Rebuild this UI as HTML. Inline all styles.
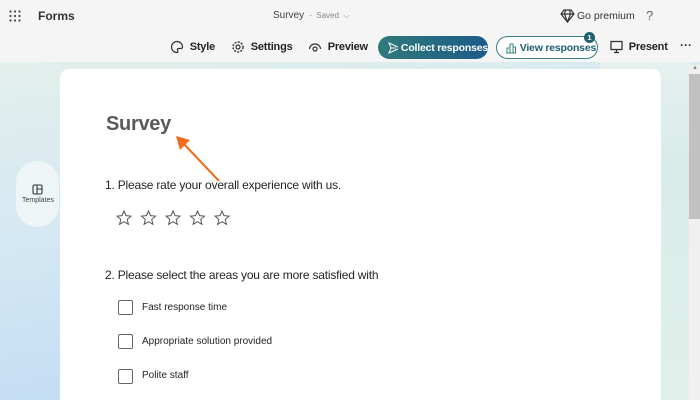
<!DOCTYPE html>
<html><head><meta charset="utf-8"><style>
*{margin:0;padding:0;box-sizing:border-box}
html,body{width:700px;height:400px;overflow:hidden}
body{position:relative;font-family:"Liberation Sans",sans-serif;color:#242424;background:#f5f5f5}
.bg{position:absolute;left:0;top:62px;width:700px;height:338px;background:linear-gradient(170deg,#e3efeb 0%,#d4e8f3 40%,#b9d6f5 100%);z-index:0}
.bg2{position:absolute;left:600px;top:62px;width:90px;height:338px;background:linear-gradient(180deg,#e6f0ef,#d8ecea 30%,#e0f0ea 100%)}
.t{position:absolute;white-space:nowrap;z-index:2}
.card{position:absolute;left:60px;top:69px;width:601px;height:340px;background:#fff;border-radius:9px;z-index:1}
.cb{position:absolute;left:118px;width:15px;height:15px;border:1.3px solid #666;border-radius:2px;z-index:2}
.btn{position:absolute;z-index:2;font-size:11px;font-weight:bold;display:flex;align-items:center;white-space:nowrap;letter-spacing:-0.2px}
</style></head><body>
<div class="bg"></div><div class="bg2"></div>
<svg class="t" style="left:9px;top:10px" width="12" height="12"><g fill="#444"><circle cx="1.5" cy="1.5" r="1.1"/><circle cx="6" cy="1.5" r="1.1"/><circle cx="10.5" cy="1.5" r="1.1"/><circle cx="1.5" cy="6" r="1.1"/><circle cx="6" cy="6" r="1.1"/><circle cx="10.5" cy="6" r="1.1"/><circle cx="1.5" cy="10.5" r="1.1"/><circle cx="6" cy="10.5" r="1.1"/><circle cx="10.5" cy="10.5" r="1.1"/></g></svg>
<div class="t" style="left:38px;top:9px;font-size:12px;font-weight:bold;color:#333">Forms</div>
<div class="t" style="left:273px;top:10px;font-size:10px;color:#444">Survey <span style="font-size:8px;color:#888">&nbsp;-&nbsp; Saved &nbsp;⌵</span></div>
<svg class="t" style="left:560px;top:9px" width="15" height="14"><path d="M4 1h7l3 4-6.5 8L1 5z M1 5h13 M5.5 1 4.5 5 7.5 13 10.5 5 9.5 1" fill="none" stroke="#333" stroke-width="1.2"/></svg>
<div class="t" style="left:577px;top:10px;font-size:10.5px;color:#333">Go premium</div>
<div class="t" style="left:646px;top:8px;font-size:13px;color:#666">?</div>

<div class="btn" style="left:170px;top:40px"><svg width="14" height="14"><path d="M7 1.5a5.5 5.5 0 1 0 0 11c1.2 0 1-1.5.5-2.2-.6-1 .2-1.8 1.3-1.8h2.2c1 0 1.5-.8 1.5-1.7A5.5 5.5 0 0 0 7 1.5z" fill="none" stroke="#333" stroke-width="1.2"/></svg>&nbsp; Style</div>
<div class="btn" style="left:231px;top:40px"><svg width="14" height="14"><circle cx="7" cy="7" r="2" fill="none" stroke="#333" stroke-width="1.2"/><circle cx="7" cy="7" r="5" fill="none" stroke="#333" stroke-width="1.4" stroke-dasharray="2 1.3"/></svg>&nbsp; Settings</div>
<div class="btn" style="left:308px;top:40px"><svg width="14" height="14"><path d="M1.5 9a5.5 5 0 0 1 11 0" fill="none" stroke="#333" stroke-width="1.2"/><circle cx="7" cy="9" r="2" fill="none" stroke="#333" stroke-width="1.2"/></svg>&nbsp; Preview</div>
<div class="btn" style="left:378px;top:36px;width:110px;height:23px;border-radius:12px;background:linear-gradient(90deg,#2f7b7b,#1c5a88);color:#fff;padding-left:10px;font-size:10.5px"><svg width="13" height="12"><path d="M1 1l11 5-11 5 2-5z M3 6h5" fill="none" stroke="#fff" stroke-width="1"/></svg>&nbsp;Collect responses</div>
<div class="btn" style="left:496px;top:36px;width:102px;height:23px;border-radius:12px;border:1.3px solid #3a7f80;background:#fff;color:#1f5f70;padding-left:8px;font-size:10.5px"><svg width="12" height="12"><path d="M1 11h10 M2 11V6h3v5 M5 11V2h3v9 M8 11V5h2.5v6" fill="none" stroke="#3a7f80" stroke-width="1"/></svg>&nbsp;View responses</div>
<div class="t" style="left:584px;top:32px;width:11px;height:11px;border-radius:50%;background:#1f5f70;color:#fff;font-size:7.5px;font-weight:bold;text-align:center;line-height:11px">1</div>
<div class="btn" style="left:610px;top:40px"><svg width="13" height="14"><rect x="1" y="1.5" width="11" height="8" fill="none" stroke="#333" stroke-width="1.3"/><path d="M6.5 9.5v3 M4 12.5h5" stroke="#333" stroke-width="1.3"/></svg>&nbsp; Present</div>
<div class="t" style="left:680px;top:38px;font-size:12px;font-weight:bold;color:#333">···</div>

<div class="t" style="left:689px;top:65px;width:11px;height:335px;background:#f0f0f0"></div>
<div class="t" style="left:689px;top:74px;width:11px;height:145px;background:#c1c1c1"></div>
<div class="t" style="left:692px;top:65px;font-size:6px;color:#888">▲</div>

<div class="t" style="left:16px;top:161px;width:43px;height:66px;border-radius:22px;background:#eef5f7;z-index:2"></div>
<svg class="t" style="left:32px;top:184px;z-index:3" width="11" height="11"><rect x="1" y="1" width="9" height="9" rx="1.5" fill="none" stroke="#333" stroke-width="1.1"/><path d="M5 1v9 M5 5h5" stroke="#333" stroke-width="1.1"/></svg>
<div class="t" style="left:22px;top:197px;font-size:7px;color:#444;z-index:3">Templates</div>

<div class="card"></div>
<div class="t" style="left:106px;top:113px;font-size:20px;font-weight:bold;color:#5a5a5a;letter-spacing:-0.3px">Survey</div>
<svg class="t" style="left:170px;top:130px;z-index:3" width="55" height="55"><path d="M49 51 L12 12" stroke="#f26a1b" stroke-width="2"/><path d="M6 6 L20 10 L10 20z" fill="#f26a1b"/></svg>
<div class="t" style="left:105px;top:178px;font-size:12px;letter-spacing:-0.2px">1. Please rate your overall experience with us.</div>
<svg class="t" style="left:116px;top:210px" width="120" height="16"><g fill="none" stroke="#555" stroke-width="1"><path id="s" d="M8 1l2 4.6 5 .5-3.8 3.3 1.2 4.9L8 11.7 3.6 14.3l1.2-4.9L1 6.1l5-.5z"/><use href="#s" x="24.5"/><use href="#s" x="49"/><use href="#s" x="73.5"/><use href="#s" x="98"/></g></svg>
<div class="t" style="left:105px;top:268px;font-size:12px;letter-spacing:-0.2px">2. Please select the areas you are more satisfied with</div>
<div class="cb" style="top:300px"></div><div class="t" style="left:142px;top:302px;font-size:10px">Fast response time</div>
<div class="cb" style="top:334px"></div><div class="t" style="left:142px;top:336px;font-size:10px">Appropriate solution provided</div>
<div class="cb" style="top:369px"></div><div class="t" style="left:142px;top:370px;font-size:10px">Polite staff</div>
</body></html>
